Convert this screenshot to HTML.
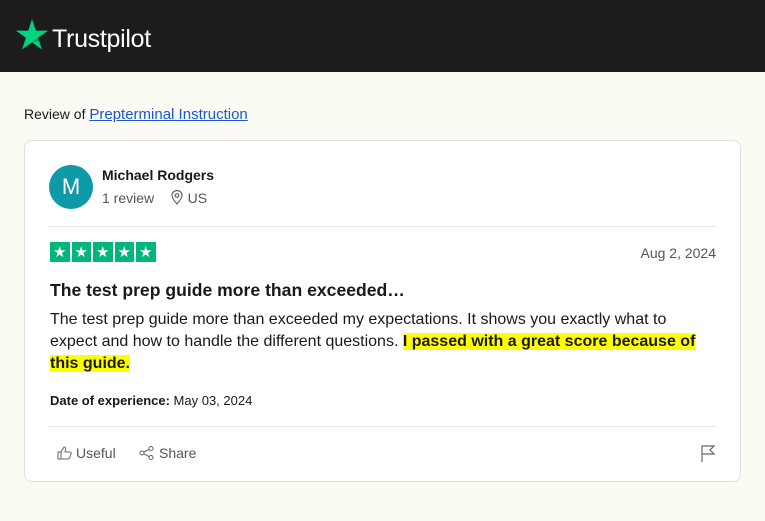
<!DOCTYPE html>
<html><head><meta charset="utf-8"><style>
*{margin:0;padding:0;box-sizing:border-box}
body{width:765px;height:521px;background:#fbfaf3;font-family:"Liberation Sans",sans-serif;color:#191919;position:relative;overflow:hidden}
.hdr{position:absolute;left:0;top:0;width:765px;height:72px;background:#1c1c1c}
.logo{position:absolute;left:52px;top:25px;color:#fff;font-size:25px;letter-spacing:-0.3px}
.rev{position:absolute;left:24px;top:106px;font-size:14px}
.rev a{color:#1a57d6;text-decoration:underline;font-size:15px}
.card{position:absolute;left:24px;top:140px;width:717px;height:342px;background:#fff;border:1px solid #e0e0dc;border-radius:8px}
.av{position:absolute;left:24px;top:24px;width:44px;height:44px;border-radius:50%;background:#0e9aa7;color:#fff;font-size:22px;text-align:center;line-height:44px}
.name{position:absolute;left:77px;top:26px;font-size:14px;font-weight:bold}
.meta{position:absolute;left:77px;top:49px;font-size:14px;color:#555}
.hr{position:absolute;left:24px;right:24px;height:1px;background:#e5e5e5}
.stars{position:absolute;left:25px;top:101px;display:flex;gap:2px}
.stars div{width:19.5px;height:20px;background:#00b67a;display:flex;align-items:center;justify-content:center;color:#fff;font-size:15px}
.date{position:absolute;right:24px;top:104px;font-size:14px;color:#555}
.title{position:absolute;left:25px;top:139px;font-size:17.6px;font-weight:bold}
.body{position:absolute;left:25px;top:168px;width:655px;font-size:16px;line-height:22px}
.hl{background:#ffff00;font-weight:bold}
.doe{position:absolute;left:25px;top:252px;font-size:13px}
.act{position:absolute;top:304px;font-size:14px;color:#555;display:flex;align-items:center;gap:4px}
</style></head><body>
<div class="hdr">
<svg style="position:absolute;left:16px;top:19px" width="32" height="31" viewBox="0 0 32 31"><polygon points="16,0 19.8,11.6 32,11.6 22.1,18.8 25.9,30.5 16,23.3 6.1,30.5 9.9,18.8 0,11.6 12.2,11.6" fill="#00d47f"/><polygon points="22.1,18.8 23,21.7 16,23.3" fill="#0a8a55"/></svg>
<div class="logo">Trustpilot</div></div>
<div class="rev">Review of <a>Prepterminal Instruction</a></div>
<div class="card">
<div class="av">M</div>
<div class="name">Michael Rodgers</div>
<div class="meta">1 review &nbsp;&nbsp;&nbsp;<svg width="14" height="15" viewBox="0 0 14 15" style="vertical-align:-2px"><path d="M7 14C3.5 10 2 7.7 2 5.5a5 5 0 0110 0C12 7.7 10.5 10 7 14z" fill="none" stroke="#666" stroke-width="1.2"/><circle cx="7" cy="5.5" r="1.8" fill="none" stroke="#666" stroke-width="1.2"/></svg> US</div>
<div class="hr" style="top:85px"></div>
<div class="stars"><div>★</div><div>★</div><div>★</div><div>★</div><div>★</div></div>
<div class="date">Aug 2, 2024</div>
<div class="title">The test prep guide more than exceeded…</div>
<div class="body">The test prep guide more than exceeded my expectations. It shows you exactly what to expect and how to handle the different questions. <span class="hl">I passed with a great score because of this guide.</span></div>
<div class="doe"><b>Date of experience:</b> May 03, 2024</div>
<div class="hr" style="top:285px"></div>
<div class="act" style="left:32px"><svg width="15" height="14" viewBox="0 0 15 14"><path d="M1 6h3v7H1zM4 6l3-5c1 0 2 1 1.5 2.5L8 6h5c1 0 1.5 1 1 2l-1.5 4c-.3.7-1 1-1.5 1H4" fill="none" stroke="#666" stroke-width="1"/></svg>Useful</div>
<div class="act" style="left:114px"><svg width="16" height="14" viewBox="0 0 16 14"><circle cx="3" cy="7" r="2" fill="none" stroke="#666"/><circle cx="12" cy="2.5" r="2" fill="none" stroke="#666"/><circle cx="12" cy="11.5" r="2" fill="none" stroke="#666"/><path d="M5 6l5-2.5M5 8l5 2.5" stroke="#666"/></svg>Share</div>
<svg style="position:absolute;left:676px;top:304px" width="14" height="17" viewBox="0 0 14 17"><path d="M1 17V1h12l-4 4 4 4H1" fill="none" stroke="#666" stroke-width="1.2"/></svg>
</div>
</body></html>
